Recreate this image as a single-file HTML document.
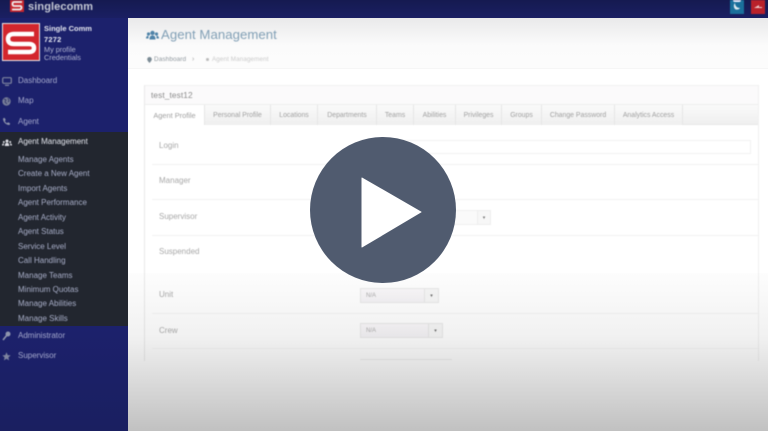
<!DOCTYPE html>
<html><head><meta charset="utf-8"><style>
html,body{margin:0;padding:0}
body{width:768px;height:431px;overflow:hidden;position:relative;background:#fff;font-family:"Liberation Sans",sans-serif}
.a{position:absolute;white-space:nowrap}
.blur{filter:blur(.55px)}
.top{left:0;top:0;width:768px;height:18px;background:linear-gradient(#151a50,#1a1f62)}
.side{left:0;top:18px;width:128px;height:413px;background:#1c216c}
.dark{left:0;top:132px;width:128px;height:194px;background:#22262f}
.m{left:18px;font-size:8px;letter-spacing:0;color:#a4a8cc;line-height:10px}
.s{left:18px;font-size:8px;letter-spacing:0;color:#a8aec8;line-height:10px}
.main{left:128px;top:18px;width:640px;height:413px;background:#fff}
.tab{top:105px;height:20px;border-right:1px solid #e6e6e6;font-size:6.9px;color:#a0a0a0;line-height:21px;text-align:center;box-sizing:border-box;background:linear-gradient(#fafafa,#efefef)}
.lab{left:159px;font-size:8px;letter-spacing:0;color:#a8a8a8;line-height:10px}
.hr{left:152px;height:1px;width:606px;background:#f1f1f1}
.sel{height:15px;background:linear-gradient(#faf8fa,#f4f2f5);border:1px solid #e8e8e8;box-sizing:border-box;font-size:6px;color:#aaa;line-height:14px;padding-left:5px}
.sel i{position:absolute;right:0;top:0;width:13px;height:13px;border-left:1px solid #e6e6e6;background:#f6f6f6;font-style:normal;text-align:center;font-size:5px;color:#666}
</style></head><body>
<div class="a main"></div>
<div class="a" style="left:128px;top:18px;width:640px;height:50px;background:linear-gradient(#e9e9ea,#fbfbfb 55%,#fcfcfc);border-bottom:1px solid #f6f6f6"></div>

<div class="blur">
<svg class="a" style="left:146px;top:30px" width="13" height="10" viewBox="0 0 13 10"><circle cx="6.500" cy="3" r="2.200" fill="#4f83a8"/><circle cx="2.500" cy="4" r="1.600" fill="#4f83a8"/><circle cx="10.500" cy="4" r="1.600" fill="#4f83a8"/><path d="M3.500 9.500c0-3 1-4 3-4s3 1 3 4zM0 8.500c0-2 1-2.800 2.500-2.800v2.800zM13 8.500c0-2-1-2.800-2.500-2.800v2.800z" fill="#4f83a8"/></svg>
<div class="a" style="left:161px;top:27px;font-size:13.200px;letter-spacing:.05px;color:#82a0b6;line-height:16px">Agent Management</div>
<svg class="a" style="left:147px;top:57px" width="5" height="6" viewBox="0 0 5 6"><path d="M2.500 0a2.300 2.300 0 0 1 2.300 2.300C4.800 3.800 2.500 6 2.500 6S.2 3.800.2 2.300A2.300 2.300 0 0 1 2.500 0z" fill="#7c8c96"/></svg>
<div class="a" style="left:154px;top:55px;font-size:6.400px;letter-spacing:.1px;color:#929aa0;line-height:9px">Dashboard</div>
<div class="a" style="left:192px;top:55px;font-size:7px;color:#aaa;line-height:9px">›</div>
<div class="a" style="left:206px;top:58px;width:3px;height:3px;border-radius:50%;background:#bbb"></div>
<div class="a" style="left:212px;top:55px;font-size:6.300px;letter-spacing:.1px;color:#cbcbcb;line-height:9px">Agent Management</div>

<!-- panel -->
<div class="a" style="left:144px;top:85px;width:615px;height:276px;border-left:1px solid #e9e9e9;border-right:1px solid #f0f0f0;border-top:1px solid #f1f1f1;box-sizing:border-box"></div>
<div class="a" style="left:145px;top:86px;width:613px;height:19px;background:#fbfafb;border-bottom:1px solid #eee;box-sizing:border-box"></div>
<div class="a" style="left:151px;top:90px;font-size:8.300px;letter-spacing:.1px;color:#8c8c8c;line-height:11px">test_test12</div>
<div class="a" style="left:145px;top:105px;width:613px;height:20px;background:linear-gradient(#fafafa,#efefef);border-bottom:1px solid #e8e8e8;box-sizing:border-box"></div>
<div class="a tab" style="left:145px;width:60px;background:#fff;font-size:7.400px">Agent Profile</div>
<div class="a tab" style="left:205px;width:66px">Personal Profile</div>
<div class="a tab" style="left:271px;width:47px">Locations</div>
<div class="a tab" style="left:318px;width:59px">Departments</div>
<div class="a tab" style="left:377px;width:37px">Teams</div>
<div class="a tab" style="left:414px;width:42px">Abilities</div>
<div class="a tab" style="left:456px;width:46px">Privileges</div>
<div class="a tab" style="left:502px;width:40px">Groups</div>
<div class="a tab" style="left:542px;width:73px">Change Password</div>
<div class="a tab" style="left:615px;width:68px">Analytics Access</div>

<div class="a lab" style="top:141px">Login</div>
<div class="a lab" style="top:176px">Manager</div>
<div class="a lab" style="top:212px">Supervisor</div>
<div class="a lab" style="top:247px">Suspended</div>
<div class="a lab" style="top:290px">Unit</div>
<div class="a lab" style="top:326px">Crew</div>
<div class="a" style="left:360px;top:140px;width:391px;height:14px;border:1px solid #f1f1f1;box-sizing:border-box"></div>
<div class="a hr" style="top:164px"></div>
<div class="a hr" style="top:199px"></div>
<div class="a hr" style="top:235px"></div>
<div class="a hr" style="top:313px;background:#f4f4f4"></div>
<div class="a hr" style="top:348px;background:#f6f6f6"></div>
<div class="a" style="left:400px;top:210px;width:91px;height:15px;border:1px solid #f0f0f0;box-sizing:border-box;background:#fafafa"></div>
<div class="a" style="left:477px;top:210px;width:14px;height:15px;border:1px solid #eeeeee;box-sizing:border-box;background:#f7f7f7;font-size:5px;color:#777;text-align:center;line-height:14px">▾</div>
<div class="a sel" style="left:360px;top:288px;width:79px">N/A<i>▾</i></div>
<div class="a sel" style="left:360px;top:323px;width:83px">N/A<i>▾</i></div>
<div class="a" style="left:360px;top:359px;width:92px;height:1px;background:#ececec"></div>
</div>

<!-- bottom fade overlay -->
<div class="a" style="left:128px;top:273px;width:640px;height:158px;background:linear-gradient(rgba(120,120,120,.015),rgba(120,120,120,.1) 40%,rgba(120,120,120,.46))"></div>

<!-- side -->
<div class="a side"></div>
<div class="a dark"></div>
<div class="a" style="left:0;top:326px;width:128px;height:105px;background:linear-gradient(#1c216c,#1a1f60)"></div>
<div class="a top"></div>
<div class="blur">
<div class="a" style="left:10px;top:0;width:14px;height:12px;background:#c9272e"></div>
<svg class="a" style="left:10px;top:0" width="14" height="12" viewBox="0 0 14 12"><path d="M12 2H4Q2.500 2 2.500 4T4 6H10Q11.500 6 11.500 7.500T10 9.500H2" fill="none" stroke="#eee" stroke-width="1.800"/></svg>
<div class="a" style="left:28px;top:0;font-size:11px;font-weight:bold;letter-spacing:.1px;color:#c4c8d4;line-height:14px">singlecomm</div>

<div class="a" style="left:730px;top:0;width:14px;height:14px;background:#1a6f9b"></div>
<div class="a" style="left:751px;top:0;width:14px;height:14px;background:#b9212b"></div>
<svg class="a" style="left:730px;top:0" width="14" height="14" viewBox="0 0 14 14"><path d="M5 3c0 3 2 5 5 5-1 2-4 2-5 1S3 5 5 3z" fill="#dfeaf0"/></svg>
<svg class="a" style="left:751px;top:0" width="14" height="14" viewBox="0 0 14 14"><path d="M3 8l5-3v2h3v1H6z" fill="#eec8c8"/></svg>
<div class="a" style="left:733px;top:0;width:8px;height:2px;background:#eef;border-radius:0 0 4px 4px"></div>

<div class="a" style="left:2px;top:23px;width:38px;height:38px;background:#d3262d;border:1px solid #e8e8e8;box-sizing:border-box"></div>
<svg class="a" style="left:3px;top:24px" width="36" height="36" viewBox="0 0 36 36"><path d="M31 11H11Q5 11 5 16T11 21H26Q31 21 31 25T26 29H5" fill="none" stroke="#fff" stroke-width="4.500" transform="translate(0 -1)"/></svg>
<div class="a" style="left:44px;top:24px;font-size:7.500px;font-weight:bold;letter-spacing:0;color:#e4e6f0;line-height:10px">Single Comm</div>
<div class="a" style="left:44px;top:35px;font-size:7.500px;font-weight:bold;letter-spacing:.2px;color:#e4e6f0;line-height:10px">7272</div>
<div class="a" style="left:44px;top:45px;font-size:7.300px;color:#b0b4d2;line-height:10px">My profile</div>
<div class="a" style="left:44px;top:53px;font-size:7.300px;color:#b0b4d2;line-height:10px">Credentials</div>

<svg class="a" style="left:2px;top:77px" width="10" height="9" viewBox="0 0 10 9"><rect x=".7" y=".7" width="8.600" height="5.600" rx="1" fill="none" stroke="#7f85a0" stroke-width="1.200"/><path d="M3 8.300h4" stroke="#7f85a0" stroke-width="1.200"/></svg>
<div class="a m" style="top:76px">Dashboard</div>
<svg class="a" style="left:2px;top:97px" width="9" height="9" viewBox="0 0 9 9"><circle cx="4.500" cy="4.500" r="4.200" fill="#777d98"/><path d="M2 2l2 1-1 2 2 2M6 1l1 3-1 1" stroke="#3a3f70" fill="none"/></svg>
<div class="a m" style="top:96px">Map</div>
<svg class="a" style="left:2px;top:117px" width="9" height="9" viewBox="0 0 9 9"><path d="M1 1.500L2.500.8 3.800 3 2.800 4c.5 1 1.200 1.700 2.200 2.200l1-1 2.200 1.300L7.500 8C4 8 1 5 1 1.500z" fill="#9096ae"/></svg>
<div class="a m" style="top:117px">Agent</div>

<svg class="a" style="left:2px;top:139px" width="10" height="7" viewBox="0 0 10 7"><circle cx="5" cy="2" r="1.500" fill="#dfe0e6"/><circle cx="1.800" cy="3" r="1" fill="#dfe0e6"/><circle cx="8.200" cy="3" r="1" fill="#dfe0e6"/><path d="M2.800 7c0-2.500 1-3.300 2.200-3.300S7.200 4.500 7.200 7zM0 6.500c0-1.500.8-2.300 1.800-2.300v2.300zM10 6.500c0-1.500-.8-2.300-1.800-2.300v2.300z" fill="#dfe0e6"/></svg>
<div class="a m" style="top:137px;color:#e4e6ee">Agent Management</div>
<div class="a s" style="top:155px">Manage Agents</div>
<div class="a s" style="top:169px">Create a New Agent</div>
<div class="a s" style="top:184px">Import Agents</div>
<div class="a s" style="top:198px">Agent Performance</div>
<div class="a s" style="top:213px">Agent Activity</div>
<div class="a s" style="top:227px">Agent Status</div>
<div class="a s" style="top:242px">Service Level</div>
<div class="a s" style="top:256px">Call Handling</div>
<div class="a s" style="top:271px">Manage Teams</div>
<div class="a s" style="top:285px">Minimum Quotas</div>
<div class="a s" style="top:299px">Manage Abilities</div>
<div class="a s" style="top:314px">Manage Skills</div>
<svg class="a" style="left:2px;top:331px" width="9" height="10" viewBox="0 0 9 10"><circle cx="6" cy="3" r="2.500" fill="#8f95ad"/><path d="M5 4L1 9" stroke="#8f95ad" stroke-width="1.600"/></svg>
<div class="a m" style="top:331px">Administrator</div>
<svg class="a" style="left:2px;top:352px" width="9" height="9" viewBox="0 0 9 9"><path d="M4.500.3l1.200 2.800 3 .3-2.300 2 .7 3-2.600-1.600L1.900 8.400l.7-3-2.300-2 3-.3z" fill="#7e84a0"/></svg>
<div class="a m" style="top:351px">Supervisor</div>
</div>

<!-- play -->
<svg class="a" style="left:0;top:0" width="768" height="431" viewBox="0 0 768 431"><circle cx="383" cy="210" r="73" fill="#505b6f"/><path d="M362 178L421 212L362 247Z" fill="#fff" stroke="#fff" stroke-width="1" stroke-linejoin="round"/></svg>
</body></html>
